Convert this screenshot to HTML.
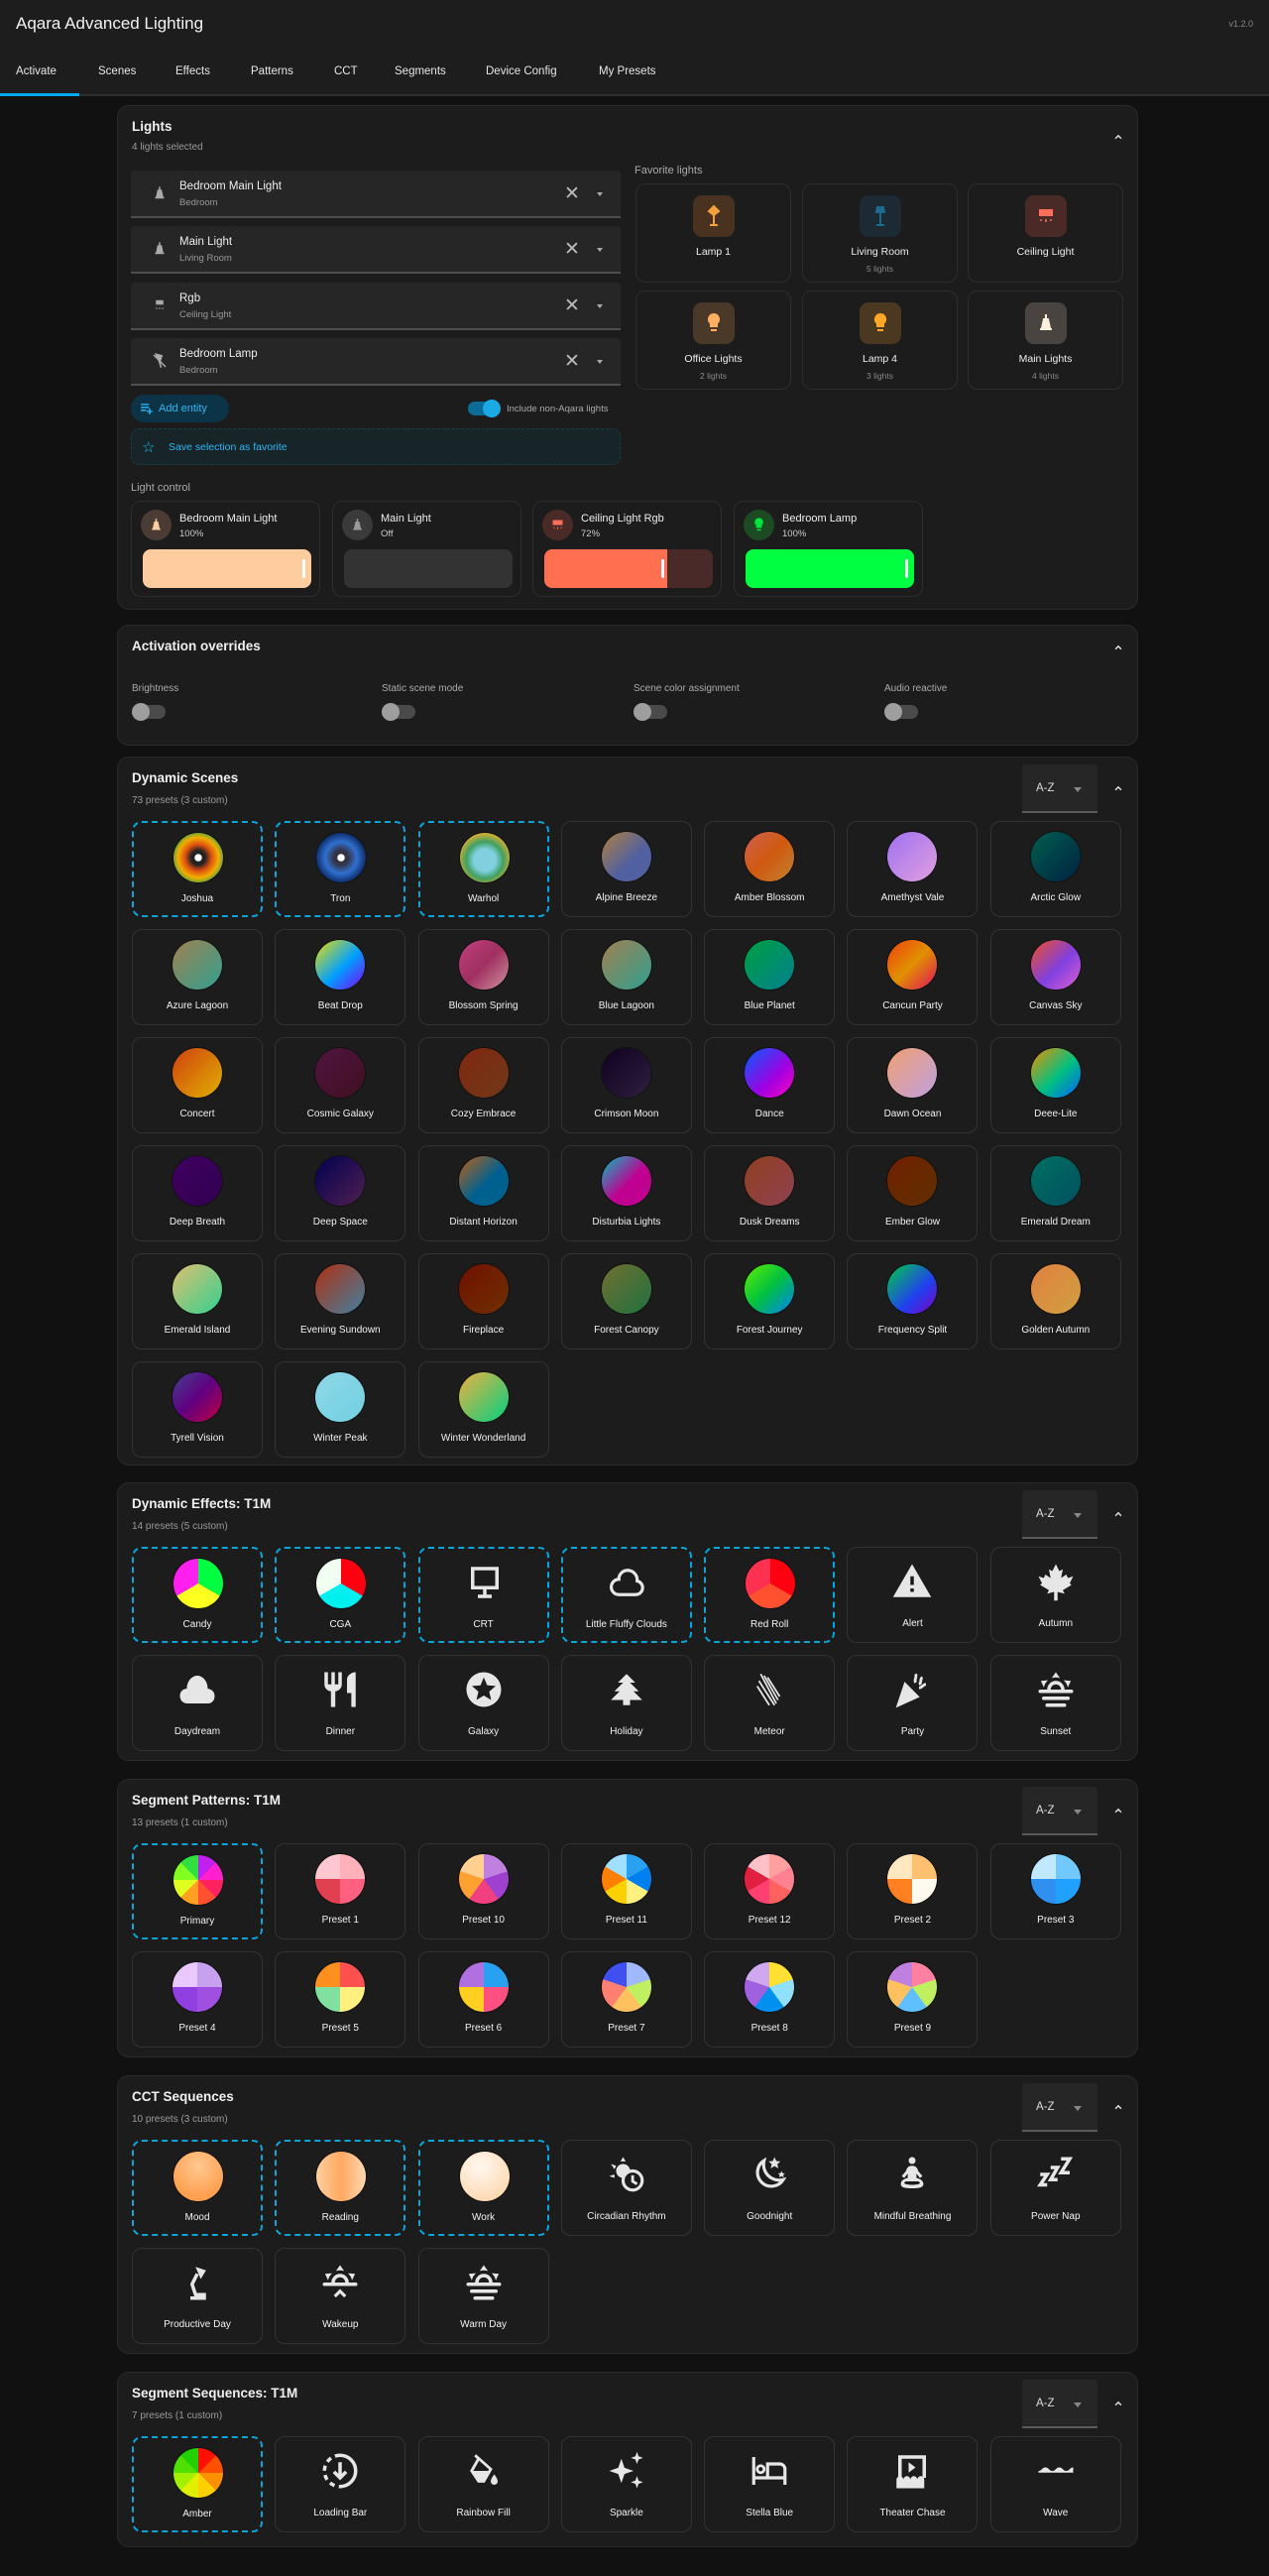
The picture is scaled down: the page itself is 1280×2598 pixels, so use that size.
<!DOCTYPE html>
<html><head><meta charset="utf-8"><style>
*{box-sizing:border-box;margin:0;padding:0}
body{width:1280px;height:2598px;background:#111;font-family:"Liberation Sans",sans-serif;color:#e8e8e8;position:relative;overflow:hidden}
.hdr{position:absolute;left:0;top:0;width:1280px;height:97px;background:#1d1d1d;border-bottom:2px solid #2e2e2e}
.ttl{position:absolute;left:16px;top:14px;font-size:17px;color:#f2f2f2}
.ver{position:absolute;right:16px;top:19px;font-size:9px;color:#888}
.tab{position:absolute;top:66px;font-size:11.5px;color:#e6e6e6}
.ul{position:absolute;left:0;top:94px;width:80px;height:3px;background:#03a9f4}
.card{position:absolute;left:118px;width:1030px;background:#1c1c1c;border:1px solid #2a2a2a;border-radius:12px}
.ct{position:absolute;left:14px;top:13px;font-size:13.5px;color:#f0f0f0;font-weight:bold}
.cs{position:absolute;left:14px;top:38px;font-size:10px;color:#9a9a9a}
.chev{position:absolute;right:12px;width:14px;height:14px}
.az{position:absolute;left:912px;top:7px;width:76px;height:49px;background:#262626;border-bottom:2px solid #5a5a5a;border-radius:4px 4px 0 0;font-size:11.5px;color:#ddd}
.az span{position:absolute;left:14px;top:18px}
.az i{position:absolute;left:52px;top:23px;border-left:4px solid transparent;border-right:4px solid transparent;border-top:5px solid #888}
.g{position:absolute;left:14px;top:64px;display:grid;grid-template-columns:repeat(7,132px);column-gap:12.3px;row-gap:12px}
.t{position:relative;width:132px;height:97px;border:1.5px solid #333;border-radius:10px;background:#1c1c1c}
.t.c{border:2px dashed #0ba5d8}
.t .ic{position:absolute;left:40px;top:10px;width:50px;height:50px;border-radius:50%;box-shadow:0 0 0 1px #111}
.t svg.ic{border-radius:0;box-shadow:none;left:44px;top:13px;width:42px;height:42px}
.t b{position:absolute;left:0;right:0;top:71px;text-align:center;font-size:10px;font-weight:normal;color:#f2f2f2;white-space:nowrap}
.er{position:absolute;left:13px;width:494px;height:48px;background:#262626;border-bottom:2px solid #4e4e4e;border-radius:4px 4px 0 0}
.er .n{position:absolute;left:49px;top:10px;font-size:11.5px;color:#eee}
.er .s{position:absolute;left:49px;top:27px;font-size:9.5px;color:#999}
.er .x{position:absolute;left:437px;top:12px;font-size:19px;color:#bbb;font-weight:normal}
.er .dd{position:absolute;left:470px;top:22px;border-left:3.5px solid transparent;border-right:3.5px solid transparent;border-top:4px solid #aaa}
.er svg{position:absolute;left:20px;top:14px;width:18px;height:18px}
.fv{position:absolute;width:157px;height:100px;border:1px solid #2e2e2e;border-radius:10px;background:#1c1c1c}
.fv .bx{position:absolute;left:57px;top:11px;width:42px;height:42px;border-radius:9px}
.fv .bx svg{position:absolute;left:9px;top:9px;width:24px;height:24px}
.fv .n{position:absolute;left:0;right:0;top:62px;text-align:center;font-size:10.5px;color:#eee}
.fv .s{position:absolute;left:0;right:0;top:80px;text-align:center;font-size:8.5px;color:#888}
.lc{position:absolute;top:398px;width:191px;height:97px;border:1px solid #2e2e2e;border-radius:10px;background:#1c1c1c}
.lc .cir{position:absolute;left:9px;top:8px;width:31px;height:31px;border-radius:50%}
.lc .cir svg{position:absolute;left:7px;top:7px;width:17px;height:17px}
.lc .n{position:absolute;left:48px;top:11px;font-size:11px;color:#eee}
.lc .s{position:absolute;left:48px;top:27px;font-size:9.5px;color:#ccc}
.lc .bar{position:absolute;left:11px;top:48px;width:170px;height:39px;border-radius:8px;overflow:hidden}
.lc .th{position:absolute;top:10px;width:3px;height:19px;background:#fff;border-radius:2px}
.tg{position:absolute;width:32px;height:14px;border-radius:7px;background:#4a4a4a}
.tg i{position:absolute;left:-2px;top:-2px;width:18px;height:18px;border-radius:50%;background:#9e9e9e}
.ol{position:absolute;top:58px;font-size:10px;color:#aaa}
</style></head><body>
<div class="hdr">
<div class="ttl">Aqara Advanced Lighting</div><div class="ver">v1.2.0</div>
<div class="tab" style="left:16px">Activate</div>
<div class="tab" style="left:99px">Scenes</div>
<div class="tab" style="left:177px">Effects</div>
<div class="tab" style="left:253px">Patterns</div>
<div class="tab" style="left:337px">CCT</div>
<div class="tab" style="left:398px">Segments</div>
<div class="tab" style="left:490px">Device Config</div>
<div class="tab" style="left:604px">My Presets</div>
<div class="ul"></div>
</div>

<!-- LIGHTS -->
<div class="card" style="top:106px;height:509px">
<div class="ct">Lights</div><div class="cs" style="top:36px">4 lights selected</div>
<svg class="chev" style="top:24px" viewBox="0 0 24 24"><path d="M7 15l5-5 5 5" stroke="#ddd" stroke-width="2.5" fill="none"/></svg>
<div class="er" style="top:65px"><svg viewBox="0 0 24 24"><path d="M12 3v4M8 17l2-9h4l2 9zM6 18h12" stroke="#aaa" stroke-width="2" fill="#aaa"/></svg><div class="n">Bedroom Main Light</div><div class="s">Bedroom</div><div class="x">✕</div><div class="dd"></div></div>
<div class="er" style="top:121px"><svg viewBox="0 0 24 24"><path d="M12 3v4M8 17l2-9h4l2 9zM6 18h12" stroke="#aaa" stroke-width="2" fill="#aaa"/></svg><div class="n">Main Light</div><div class="s">Living Room</div><div class="x">✕</div><div class="dd"></div></div>
<div class="er" style="top:178px"><svg viewBox="0 0 24 24"><rect x="7" y="5" width="10" height="6" fill="#aaa"/><path d="M8 15v2M12 15v2M16 15v2" stroke="#aaa" stroke-width="1.5"/></svg><div class="n">Rgb</div><div class="s">Ceiling Light</div><div class="x">✕</div><div class="dd"></div></div>
<div class="er" style="top:234px"><svg viewBox="0 0 24 24"><path d="M7 3l8 2-3 9zM12 14l2 7M4 4l16 16" stroke="#aaa" stroke-width="2" fill="#aaa"/></svg><div class="n">Bedroom Lamp</div><div class="s">Bedroom</div><div class="x">✕</div><div class="dd"></div></div>
<div style="position:absolute;left:13px;top:291px;width:99px;height:28px;border-radius:14px;background:#0d3446;color:#29b6f6;font-size:11px"><svg style="position:absolute;left:9px;top:7px" width="14" height="14" viewBox="0 0 24 24"><path d="M2 5h14M2 10h14M2 15h9M17 12v10M12 17h10" stroke="#29b6f6" stroke-width="2.5"/></svg><span style="position:absolute;left:28px;top:8px">Add entity</span></div>
<div style="position:absolute;left:353px;top:298px;width:31px;height:14px;border-radius:7px;background:#0b6d96"></div><div style="position:absolute;left:368px;top:296px;width:18px;height:18px;border-radius:50%;background:#1ba9e6"></div>
<div style="position:absolute;left:392px;top:300px;font-size:9.5px;color:#aaa">Include non-Aqara lights</div>
<div style="position:absolute;left:13px;top:325px;width:494px;height:37px;border-radius:8px;background:#172529;border:1px dashed #1d3d46"><span style="position:absolute;left:10px;top:9px;color:#29b6f6;font-size:15px">☆</span><span style="position:absolute;left:37px;top:12px;color:#29b6f6;font-size:10.5px">Save selection as favorite</span></div>
<div style="position:absolute;left:521px;top:59px;font-size:11px;color:#aaa">Favorite lights</div>
<div class="fv" style="left:522px;top:78px"><div class="bx" style="background:#4a3220"><svg viewBox="0 0 24 24"><path d="M12 2l-5 5 5 4 5-4zM12 11v10M8 21h8" stroke="#f5a03a" stroke-width="2" fill="#f5a03a"/></svg></div><div class="n">Lamp 1</div></div>
<div class="fv" style="left:690px;top:78px"><div class="bx" style="background:#1b2a33"><svg viewBox="0 0 24 24"><path d="M9 3h6l1 5H8zM12 8v12M8 21h8" stroke="#1e6a8f" stroke-width="2" fill="#1e6a8f"/></svg></div><div class="n">Living Room</div><div class="s">5 lights</div></div>
<div class="fv" style="left:857px;top:78px"><div class="bx" style="background:#4a2a27"><svg viewBox="0 0 24 24"><rect x="5" y="5" width="14" height="7" fill="#ff6e5a"/><path d="M7 15v2M12 15v3M17 15v2" stroke="#ff6e5a" stroke-width="1.5"/></svg></div><div class="n">Ceiling Light</div></div>
<div class="fv" style="left:522px;top:186px"><div class="bx" style="background:#4a3828"><svg viewBox="0 0 24 24"><path d="M12 2a6 6 0 0 0-4 10.5V16h8v-3.5A6 6 0 0 0 12 2zM9 18h6v2H9z" fill="#ffb060"/></svg></div><div class="n">Office Lights</div><div class="s">2 lights</div></div>
<div class="fv" style="left:690px;top:186px"><div class="bx" style="background:#4a3820"><svg viewBox="0 0 24 24"><path d="M12 2a6 6 0 0 0-4 10.5V16h8v-3.5A6 6 0 0 0 12 2zM9 18h6v2H9z" fill="#ffa726"/></svg></div><div class="n">Lamp 4</div><div class="s">3 lights</div></div>
<div class="fv" style="left:857px;top:186px"><div class="bx" style="background:#4a4440"><svg viewBox="0 0 24 24"><path d="M12 3v4M8 17l2-9h4l2 9zM6 18h12" stroke="#fff0e0" stroke-width="2" fill="#fff0e0"/></svg></div><div class="n">Main Lights</div><div class="s">4 lights</div></div>
<div style="position:absolute;left:13px;top:379px;font-size:11px;color:#aaa">Light control</div>
<div class="lc" style="left:13px"><div class="cir" style="background:#4a3c34"><svg viewBox="0 0 24 24"><path d="M12 3v4M8 17l2-9h4l2 9zM6 18h12" stroke="#ffcc9f" stroke-width="2" fill="#ffcc9f"/></svg></div><div class="n">Bedroom Main Light</div><div class="s">100%</div><div class="bar" style="background:#ffcc9f"><div class="th" style="left:161px"></div></div></div>
<div class="lc" style="left:216px"><div class="cir" style="background:#3a3a3a"><svg viewBox="0 0 24 24"><path d="M12 3v4M8 17l2-9h4l2 9zM6 18h12" stroke="#999" stroke-width="2" fill="#999"/></svg></div><div class="n">Main Light</div><div class="s">Off</div><div class="bar" style="background:#333"></div></div>
<div class="lc" style="left:418px"><div class="cir" style="background:#4a2a27"><svg viewBox="0 0 24 24"><rect x="5" y="5" width="14" height="7" fill="#ff6e5a"/><path d="M7 15v2M12 15v3M17 15v2" stroke="#ff6e5a" stroke-width="1.5"/></svg></div><div class="n">Ceiling Light Rgb</div><div class="s">72%</div><div class="bar" style="background:#4a2a28"><div style="position:absolute;left:0;top:0;width:124px;height:39px;background:#ff6f50"></div><div class="th" style="left:118px"></div></div></div>
<div class="lc" style="left:621px"><div class="cir" style="background:#1c4a22"><svg viewBox="0 0 24 24"><path d="M12 2a6 6 0 0 0-4 10.5V16h8v-3.5A6 6 0 0 0 12 2zM9 18h6v2H9z" fill="#00e53a"/></svg></div><div class="n">Bedroom Lamp</div><div class="s">100%</div><div class="bar" style="background:#00ff40"><div class="th" style="left:161px"></div></div></div>
</div>

<!-- ACTIVATION -->
<div class="card" style="top:630px;height:122px">
<div class="ct">Activation overrides</div>
<svg class="chev" style="top:15px" viewBox="0 0 24 24"><path d="M7 15l5-5 5 5" stroke="#ddd" stroke-width="2.5" fill="none"/></svg>
<div class="ol" style="left:14px">Brightness</div><div class="ol" style="left:266px">Static scene mode</div><div class="ol" style="left:520px">Scene color assignment</div><div class="ol" style="left:773px">Audio reactive</div>
<div class="tg" style="left:16px;top:80px"><i></i></div><div class="tg" style="left:268px;top:80px"><i></i></div><div class="tg" style="left:522px;top:80px"><i></i></div><div class="tg" style="left:775px;top:80px"><i></i></div>
</div>

<!-- SCENES -->
<div class="card" style="top:763px;height:715px">
<div class="ct">Dynamic Scenes</div><div class="cs">73 presets (3 custom)</div>
<div class="az"><span>A-Z</span><i></i></div>
<svg class="chev" style="top:24px" viewBox="0 0 24 24"><path d="M7 15l5-5 5 5" stroke="#ddd" stroke-width="2.5" fill="none"/></svg>
<div class="g">
<div class="t c"><div class="ic" style="background:radial-gradient(circle,#fff 0 10%,#222 11% 20%,#e05010 38%,#f0b000 58%,#50a040 75%,#c040c0)"></div><b>Joshua</b></div>
<div class="t c"><div class="ic" style="background:radial-gradient(circle,#fff 0 10%,#334 11% 20%,#3070d0 45%,#103070 70%,#60a0ff)"></div><b>Tron</b></div>
<div class="t c"><div class="ic" style="background:radial-gradient(circle at 50% 55%,#80d0e0 0 30%,#40a060 50%,#e0b030 75%,#50b050)"></div><b>Warhol</b></div>
<div class="t"><div class="ic" style="background:linear-gradient(135deg,#b08040,#5060a0 60%)"></div><b>Alpine Breeze</b></div>
<div class="t"><div class="ic" style="background:linear-gradient(135deg,#d06050,#d05a10,#c08030)"></div><b>Amber Blossom</b></div>
<div class="t"><div class="ic" style="background:linear-gradient(135deg,#a070f0,#e0a0e0)"></div><b>Amethyst Vale</b></div>
<div class="t"><div class="ic" style="background:linear-gradient(135deg,#006050,#002040)"></div><b>Arctic Glow</b></div>
<div class="t"><div class="ic" style="background:linear-gradient(135deg,#a08050,#30a090)"></div><b>Azure Lagoon</b></div>
<div class="t"><div class="ic" style="background:linear-gradient(135deg,#f0e000,#00a0ff 55%,#8000ff)"></div><b>Beat Drop</b></div>
<div class="t"><div class="ic" style="background:linear-gradient(135deg,#c04080,#a03060,#d090a0)"></div><b>Blossom Spring</b></div>
<div class="t"><div class="ic" style="background:linear-gradient(135deg,#a08050,#30a090)"></div><b>Blue Lagoon</b></div>
<div class="t"><div class="ic" style="background:linear-gradient(135deg,#00a040,#008090)"></div><b>Blue Planet</b></div>
<div class="t"><div class="ic" style="background:linear-gradient(135deg,#f04010,#e09000 50%,#e01060)"></div><b>Cancun Party</b></div>
<div class="t"><div class="ic" style="background:linear-gradient(135deg,#f05020,#8040e0 55%,#e060d0)"></div><b>Canvas Sky</b></div>
<div class="t"><div class="ic" style="background:linear-gradient(135deg,#d04010,#e0b000)"></div><b>Concert</b></div>
<div class="t"><div class="ic" style="background:linear-gradient(135deg,#501440,#401020)"></div><b>Cosmic Galaxy</b></div>
<div class="t"><div class="ic" style="background:linear-gradient(135deg,#802810,#703818)"></div><b>Cozy Embrace</b></div>
<div class="t"><div class="ic" style="background:linear-gradient(135deg,#100020,#302040)"></div><b>Crimson Moon</b></div>
<div class="t"><div class="ic" style="background:linear-gradient(135deg,#0060ff,#a000e0 60%,#ff00c0)"></div><b>Dance</b></div>
<div class="t"><div class="ic" style="background:linear-gradient(135deg,#f0a070,#c0a0e0)"></div><b>Dawn Ocean</b></div>
<div class="t"><div class="ic" style="background:linear-gradient(135deg,#f09000,#00c080 55%,#0060ff)"></div><b>Deee-Lite</b></div>
<div class="t"><div class="ic" style="background:linear-gradient(135deg,#400060,#300050)"></div><b>Deep Breath</b></div>
<div class="t"><div class="ic" style="background:linear-gradient(135deg,#000050,#502050)"></div><b>Deep Space</b></div>
<div class="t"><div class="ic" style="background:linear-gradient(135deg,#c06010,#006090 55%)"></div><b>Distant Horizon</b></div>
<div class="t"><div class="ic" style="background:linear-gradient(135deg,#00c0c0,#c00090 55%)"></div><b>Disturbia Lights</b></div>
<div class="t"><div class="ic" style="background:linear-gradient(135deg,#904020,#904050)"></div><b>Dusk Dreams</b></div>
<div class="t"><div class="ic" style="background:linear-gradient(135deg,#702000,#603000)"></div><b>Ember Glow</b></div>
<div class="t"><div class="ic" style="background:linear-gradient(135deg,#007060,#005060)"></div><b>Emerald Dream</b></div>
<div class="t"><div class="ic" style="background:linear-gradient(135deg,#e0c070,#30d090)"></div><b>Emerald Island</b></div>
<div class="t"><div class="ic" style="background:linear-gradient(135deg,#b03010,#4080a0)"></div><b>Evening Sundown</b></div>
<div class="t"><div class="ic" style="background:linear-gradient(135deg,#701000,#703000)"></div><b>Fireplace</b></div>
<div class="t"><div class="ic" style="background:linear-gradient(135deg,#707030,#207040)"></div><b>Forest Canopy</b></div>
<div class="t"><div class="ic" style="background:linear-gradient(135deg,#60f000,#00c040 50%,#0080ff)"></div><b>Forest Journey</b></div>
<div class="t"><div class="ic" style="background:linear-gradient(135deg,#00d040,#2040f0 60%,#8000c0)"></div><b>Frequency Split</b></div>
<div class="t"><div class="ic" style="background:linear-gradient(135deg,#e08040,#d0a040)"></div><b>Golden Autumn</b></div>
<div class="t"><div class="ic" style="background:linear-gradient(135deg,#404090,#600080 50%,#c00040)"></div><b>Tyrell Vision</b></div>
<div class="t"><div class="ic" style="background:linear-gradient(135deg,#90d8e8,#70d0e0)"></div><b>Winter Peak</b></div>
<div class="t"><div class="ic" style="background:linear-gradient(135deg,#f0b040,#00d080)"></div><b>Winter Wonderland</b></div>
</div></div>

<!-- EFFECTS -->
<div class="card" style="top:1495px;height:281px">
<div class="ct">Dynamic Effects: T1M</div><div class="cs">14 presets (5 custom)</div>
<div class="az"><span>A-Z</span><i></i></div>
<svg class="chev" style="top:24px" viewBox="0 0 24 24"><path d="M7 15l5-5 5 5" stroke="#ddd" stroke-width="2.5" fill="none"/></svg>
<div class="g">
<div class="t c"><div class="ic" style="background:conic-gradient(#00ff40 0 120deg,#ffff20 120deg 240deg,#ff20f0 240deg)"></div><b>Candy</b></div>
<div class="t c"><div class="ic" style="background:conic-gradient(#ff0010 0 120deg,#00f0f0 120deg 240deg,#f0fff0 240deg)"></div><b>CGA</b></div>
<div class="t c"><svg class="ic" viewBox="0 0 24 24"><path d="M4 3h16v13H4zM6 5v9h12V5zM11 16h2v3h3v2H8v-2h3z" fill="#e6e6e6"/></svg><b>CRT</b></div>
<div class="t c"><svg class="ic" viewBox="0 0 24 24"><path d="M7 19h10a4 4 0 0 0 .5-7.9A5.5 5.5 0 0 0 12 5a5 5 0 0 0-5 5.2A4.4 4.4 0 0 0 7 19z" stroke="#e6e6e6" stroke-width="1.8" fill="none"/></svg><b>Little Fluffy Clouds</b></div>
<div class="t c"><div class="ic" style="background:conic-gradient(#ff0010 0 120deg,#ff5030 120deg 240deg,#ff3050 240deg)"></div><b>Red Roll</b></div>
<div class="t"><svg class="ic" viewBox="0 0 24 24"><path d="M13 14H11V9H13M13 18H11V16H13M1 21H23L12 2L1 21Z" fill="#e6e6e6"/></svg><b>Alert</b></div>
<div class="t"><svg class="ic" viewBox="0 0 24 24"><path d="M12 2l2 4 2-1-1 5 3-2 1 2 3-1-2 4 1 1-5 3 1 2-4-1v5h-2v-5l-4 1 1-2-5-3 1-1-2-4 3 1 1-2 3 2-1-5 2 1z" fill="#e6e6e6"/></svg><b>Autumn</b></div>
<div class="t"><svg class="ic" viewBox="0 0 24 24"><path d="M6.5 20C3.5 20 2 18 2 15.5 2 13 4 11.5 6 11.5 6 7 9 4 12 4s6 3 6 7.5c2.2.2 4 1.8 4 4.2S20.5 20 18 20z" fill="#e6e6e6"/></svg><b>Daydream</b></div>
<div class="t"><svg class="ic" viewBox="0 0 24 24"><path d="M11,9H9V2H7V9H5V2H3V9C3,11.12 4.66,12.84 6.75,12.97V22H9.25V12.97C11.34,12.84 13,11.12 13,9V2H11V9M16,6V14H18.5V22H21V2C18.24,2 16,4.24 16,6Z" fill="#e6e6e6"/></svg><b>Dinner</b></div>
<div class="t"><svg class="ic" viewBox="0 0 24 24"><path d="M16.23,18L12,15.45L7.77,18L8.89,13.19L5.16,9.96L10.08,9.54L12,5L13.920,9.53L18.84,9.95L15.11,13.18L16.23,18M12,2C6.47,2 2,6.5 2,12A10,10 0 0,0 12,22A10,10 0 0,0 22,12A10,10 0 0,0 12,2Z" fill="#e6e6e6"/></svg><b>Galaxy</b></div>
<div class="t"><svg class="ic" viewBox="0 0 24 24"><path d="M10,21V18H3L8,13H5L10,8H7L12,3L17,8H14L19,13H16L21,18H14V21H10Z" fill="#e6e6e6"/></svg><b>Holiday</b></div>
<div class="t"><svg class="ic" viewBox="0 0 24 24"><path d="M7 3l9 17M9 4l8 14M6 7l9 14M11 5l7 11M5 10l7 11" stroke="#e6e6e6" stroke-width="1"/></svg><b>Meteor</b></div>
<div class="t"><svg class="ic" viewBox="0 0 24 24"><path d="M4 21l4-12 7 7zM14 3c1 2-1 3 0 5M18 5c-2 1 0 3-2 4M20 9c-2 0-2 2-4 2" stroke="#e6e6e6" stroke-width="1.6" fill="#e6e6e6"/></svg><b>Party</b></div>
<div class="t"><svg class="ic" viewBox="0 0 24 24"><path d="M3,12H7A5,5 0 0,1 12,7A5,5 0 0,1 17,12H21A1,1 0 0,1 22,13A1,1 0 0,1 21,14H3A1,1 0 0,1 2,13A1,1 0 0,1 3,12M5,16H19A1,1 0 0,1 20,17A1,1 0 0,1 19,18H5A1,1 0 0,1 4,17A1,1 0 0,1 5,16M17,20A1,1 0 0,1 18,21A1,1 0 0,1 17,22H7A1,1 0 0,1 6,21A1,1 0 0,1 7,20H17M15,12A3,3 0 0,0 12,9A3,3 0 0,0 9,12H15M12,2L14.39,5.42C13.65,5.15 12.84,5 12,5C11.16,5 10.350,5.15 9.61,5.42L12,2M3.34,7L7.5,6.65C6.9,7.16 6.36,7.78 5.94,8.5C5.5,9.24 5.25,10 5.11,10.79L3.34,7M20.65,7L18.88,10.79C18.74,10 18.47,9.23 18.05,8.5C17.63,7.78 17.1,7.15 16.5,6.64L20.65,7Z" fill="#e6e6e6"/></svg><b>Sunset</b></div>
</div></div>

<!-- PATTERNS -->
<div class="card" style="top:1794px;height:281px">
<div class="ct">Segment Patterns: T1M</div><div class="cs">13 presets (1 custom)</div>
<div class="az"><span>A-Z</span><i></i></div>
<svg class="chev" style="top:24px" viewBox="0 0 24 24"><path d="M7 15l5-5 5 5" stroke="#ddd" stroke-width="2.5" fill="none"/></svg>
<div class="g">
<div class="t c"><div class="ic" style="background:conic-gradient(#c020f0 0 45deg,#ff20d0 45deg 90deg,#ff2060 90deg 135deg,#ff5030 135deg 180deg,#ffa020 180deg 225deg,#e0ff20 225deg 270deg,#80ff20 270deg 315deg,#30e040 315deg)"></div><b>Primary</b></div>
<div class="t"><div class="ic" style="background:conic-gradient(#ffb0b8 0 90deg,#ff6080 90deg 180deg,#e04050 180deg 270deg,#ffc8d0 270deg)"></div><b>Preset 1</b></div>
<div class="t"><div class="ic" style="background:conic-gradient(#c080e0 0 72deg,#a040d0 72deg 144deg,#f04080 144deg 216deg,#ffa030 216deg 288deg,#ffd090 288deg)"></div><b>Preset 10</b></div>
<div class="t"><div class="ic" style="background:conic-gradient(#2aa0f0 0 60deg,#0080f0 60deg 120deg,#fff080 120deg 180deg,#ffd000 180deg 240deg,#ff8000 240deg 300deg,#a0e0ff 300deg)"></div><b>Preset 11</b></div>
<div class="t"><div class="ic" style="background:conic-gradient(#ffa0a0 0 60deg,#ff8090 60deg 120deg,#ff6060 120deg 180deg,#ff4070 180deg 240deg,#e02040 240deg 300deg,#ffc0c8 300deg)"></div><b>Preset 12</b></div>
<div class="t"><div class="ic" style="background:conic-gradient(#ffc070 0 90deg,#fffaf0 90deg 180deg,#ff8020 180deg 270deg,#ffe8c0 270deg)"></div><b>Preset 2</b></div>
<div class="t"><div class="ic" style="background:conic-gradient(#70c8ff 0 90deg,#20a0ff 90deg 180deg,#3090f0 180deg 270deg,#c0e8ff 270deg)"></div><b>Preset 3</b></div>
<div class="t"><div class="ic" style="background:conic-gradient(#c8a0f0 0 90deg,#a050e0 90deg 180deg,#9040e0 180deg 270deg,#e8c8ff 270deg)"></div><b>Preset 4</b></div>
<div class="t"><div class="ic" style="background:conic-gradient(#ff5050 0 90deg,#fff080 90deg 180deg,#80e0a0 180deg 270deg,#ff9020 270deg)"></div><b>Preset 5</b></div>
<div class="t"><div class="ic" style="background:conic-gradient(#2aa0f0 0 90deg,#ff5080 90deg 180deg,#ffd020 180deg 270deg,#b070e0 270deg)"></div><b>Preset 6</b></div>
<div class="t"><div class="ic" style="background:conic-gradient(#a0b8ff 0 72deg,#c0f060 72deg 144deg,#ffc060 144deg 216deg,#ff8070 216deg 288deg,#4050f0 288deg)"></div><b>Preset 7</b></div>
<div class="t"><div class="ic" style="background:conic-gradient(#ffe030 0 72deg,#90e0ff 72deg 144deg,#0090f0 144deg 216deg,#a060e0 216deg 288deg,#d0a8f0 288deg)"></div><b>Preset 8</b></div>
<div class="t"><div class="ic" style="background:conic-gradient(#ff80a0 0 72deg,#c0f060 72deg 144deg,#60c0ff 144deg 216deg,#ffc060 216deg 288deg,#c080e0 288deg)"></div><b>Preset 9</b></div>
</div></div>

<!-- CCT -->
<div class="card" style="top:2093px;height:281px">
<div class="ct">CCT Sequences</div><div class="cs">10 presets (3 custom)</div>
<div class="az"><span>A-Z</span><i></i></div>
<svg class="chev" style="top:24px" viewBox="0 0 24 24"><path d="M7 15l5-5 5 5" stroke="#ddd" stroke-width="2.5" fill="none"/></svg>
<div class="g">
<div class="t c"><div class="ic" style="background:radial-gradient(circle at 50% 30%,#ffc890,#ffa050 70%)"></div><b>Mood</b></div>
<div class="t c"><div class="ic" style="background:linear-gradient(90deg,#ffd0a0,#ffa860 50%,#ffd8b0)"></div><b>Reading</b></div>
<div class="t c"><div class="ic" style="background:radial-gradient(circle at 40% 30%,#fff8f0,#ffd8b0 80%)"></div><b>Work</b></div>
<div class="t"><svg class="ic" viewBox="0 0 24 24"><circle cx="10" cy="10" r="4" fill="#e6e6e6"/><path d="M10 2l1.5 2.5h-3zM3 6l3 1-1 2zM2 13l3-1 0 2z" fill="#e6e6e6"/><circle cx="15.5" cy="15.5" r="5.5" fill="#1c1c1c" stroke="#e6e6e6" stroke-width="1.8"/><path d="M15.5 12.5v3.5l2.5 1.5" stroke="#e6e6e6" stroke-width="1.6" fill="none"/></svg><b>Circadian Rhythm</b></div>
<div class="t"><svg class="ic" viewBox="0 0 24 24"><path d="M9 4a8 8 0 1 0 11 11A9 9 0 0 1 9 4z" stroke="#e6e6e6" stroke-width="1.8" fill="none"/><path d="M15 2l1 2.3 2.4.2-1.8 1.6.6 2.4-2.2-1.3-2.2 1.3.6-2.4-1.8-1.6 2.4-.2zM19 10l.6 1.3 1.4.1-1 .9.3 1.4-1.3-.7-1.3.7.3-1.4-1-.9 1.4-.1z" fill="#e6e6e6"/></svg><b>Goodnight</b></div>
<div class="t"><svg class="ic" viewBox="0 0 24 24"><circle cx="12" cy="4" r="2" fill="#e6e6e6"/><path d="M12 7c-2 0-3 1-3.5 3L6 13l1.5 1 2-2.5V14c-2 .5-4 1.5-4 3.5 0 2 2 2.5 6.5 2.5s6.5-.5 6.5-2.5c0-2-2-3-4-3.5v-2.5l2 2.5 1.5-1-2.5-3C15 8 14 7 12 7zM9 16h6c1 0 1.5.5 1.5 1s-2 1-4.5 1-4.5-.5-4.5-1 .5-1 1.5-1z" fill="#e6e6e6"/></svg><b>Mindful Breathing</b></div>
<div class="t"><svg class="ic" viewBox="0 0 24 24"><path d="M3 12h4l-4 6h4M9 8h4l-4 7h4M15 3h5l-5 8h5" stroke="#e6e6e6" stroke-width="2" fill="none"/></svg><b>Power Nap</b></div>
<div class="t"><svg class="ic" viewBox="0 0 24 24"><path d="M8 21h8v-2h-5l-2-6 3-6" stroke="#e6e6e6" stroke-width="2" fill="none"/><path d="M11 3l6 2-3 5z" fill="#e6e6e6"/></svg><b>Productive Day</b></div>
<div class="t"><svg class="ic" viewBox="0 0 24 24"><path d="M3,12H7A5,5 0 0,1 12,7A5,5 0 0,1 17,12H21A1,1 0 0,1 22,13A1,1 0 0,1 21,14H3A1,1 0 0,1 2,13A1,1 0 0,1 3,12M15,12A3,3 0 0,0 12,9A3,3 0 0,0 9,12H15M12,2L14.39,5.42C13.65,5.15 12.84,5 12,5C11.16,5 10.35,5.15 9.61,5.42L12,2M3.34,7L7.5,6.65C6.9,7.16 6.36,7.78 5.94,8.5C5.5,9.24 5.25,10 5.11,10.79L3.34,7M20.65,7L18.88,10.79C18.74,10 18.47,9.23 18.05,8.5C17.63,7.78 17.1,7.15 16.5,6.64L20.65,7Z" fill="#e6e6e6"/><path d="M9 20l3-3 3 3" stroke="#e6e6e6" stroke-width="1.8" fill="none"/></svg><b>Wakeup</b></div>
<div class="t"><svg class="ic" viewBox="0 0 24 24"><path d="M3,12H7A5,5 0 0,1 12,7A5,5 0 0,1 17,12H21A1,1 0 0,1 22,13A1,1 0 0,1 21,14H3A1,1 0 0,1 2,13A1,1 0 0,1 3,12M5,16H19A1,1 0 0,1 20,17A1,1 0 0,1 19,18H5A1,1 0 0,1 4,17A1,1 0 0,1 5,16M17,20A1,1 0 0,1 18,21A1,1 0 0,1 17,22H7A1,1 0 0,1 6,21A1,1 0 0,1 7,20H17M15,12A3,3 0 0,0 12,9A3,3 0 0,0 9,12H15M12,2L14.39,5.42C13.65,5.15 12.84,5 12,5C11.16,5 10.35,5.15 9.61,5.42L12,2M3.34,7L7.5,6.65C6.9,7.16 6.36,7.78 5.94,8.5C5.5,9.24 5.25,10 5.11,10.79L3.34,7M20.65,7L18.88,10.79C18.74,10 18.47,9.23 18.05,8.5C17.63,7.78 17.1,7.15 16.5,6.64L20.65,7Z" fill="#e6e6e6"/></svg><b>Warm Day</b></div>
</div></div>

<!-- SEGMENT SEQUENCES -->
<div class="card" style="top:2392px;height:177px">
<div class="ct">Segment Sequences: T1M</div><div class="cs">7 presets (1 custom)</div>
<div class="az"><span>A-Z</span><i></i></div>
<svg class="chev" style="top:24px" viewBox="0 0 24 24"><path d="M7 15l5-5 5 5" stroke="#ddd" stroke-width="2.5" fill="none"/></svg>
<div class="g">
<div class="t c"><div class="ic" style="background:conic-gradient(#ff1000 0 45deg,#ff5000 45deg 90deg,#ff9000 90deg 135deg,#ffd000 135deg 180deg,#e0f000 180deg 225deg,#a0f000 225deg 270deg,#50e000 270deg 315deg,#20d000 315deg)"></div><b>Amber</b></div>
<div class="t"><svg class="ic" viewBox="0 0 24 24"><path d="M12 3a9 9 0 0 1 0 18" stroke="#e6e6e6" stroke-width="2" fill="none"/><path d="M12 3a9 9 0 0 0 0 18" stroke="#e6e6e6" stroke-width="2" stroke-dasharray="3 2.5" fill="none"/><path d="M12 7v9M8.5 12.5L12 16l3.5-3.5" stroke="#e6e6e6" stroke-width="2" fill="none"/></svg><b>Loading Bar</b></div>
<div class="t"><svg class="ic" viewBox="0 0 24 24"><path d="M7 3l2 2-4 7 4 6h3l4-7z" stroke="#e6e6e6" stroke-width="1.6" fill="none"/><path d="M5.5 12h10l-3.5 6H9z" fill="#e6e6e6"/><path d="M18 14s-2 2.5-2 4a2 2 0 0 0 4 0c0-1.5-2-4-2-4z" fill="#e6e6e6"/></svg><b>Rainbow Fill</b></div>
<div class="t"><svg class="ic" viewBox="0 0 24 24"><path d="M9 5l1.8 5.2L16 12l-5.2 1.8L9 19l-1.8-5.2L2 12l5.2-1.8zM18 1l.9 2.6 2.6.9-2.6.9L18 8l-.9-2.6-2.6-.9 2.6-.9zM18 15l.9 2.6 2.6.9-2.6.9L18 22l-.9-2.6-2.6-.9 2.6-.9z" fill="#e6e6e6"/></svg><b>Sparkle</b></div>
<div class="t"><svg class="ic" viewBox="0 0 24 24"><path d="M3 4v16M3 16h18v4M11 16V8h7a3 3 0 0 1 3 3v5" stroke="#e6e6e6" stroke-width="1.8" fill="none"/><circle cx="7" cy="11" r="2" stroke="#e6e6e6" stroke-width="1.6" fill="none"/></svg><b>Stella Blue</b></div>
<div class="t"><svg class="ic" viewBox="0 0 24 24"><path d="M4 3h16v13h-2V5H6v11H4z" fill="#e6e6e6"/><path d="M10 7l4 3-4 3z" fill="#e6e6e6"/><path d="M3 22v-5c0-1 1-2 2-2s2 1 2 2c0-1 1-2 2-2s2 1 2 2c0-1 1-2 2-2s2 1 2 2c0-1 1-2 2-2s2 1 2 2v5z" fill="#e6e6e6"/></svg><b>Theater Chase</b></div>
<div class="t"><svg class="ic" viewBox="0 0 24 24"><path d="M2 12c2 0 2-2 4-2s2 2 4 2 2-2 4-2 2 2 4 2 2-2 4-2v3H2z" fill="#e6e6e6"/></svg><b>Wave</b></div>
</div></div>
</body></html>
